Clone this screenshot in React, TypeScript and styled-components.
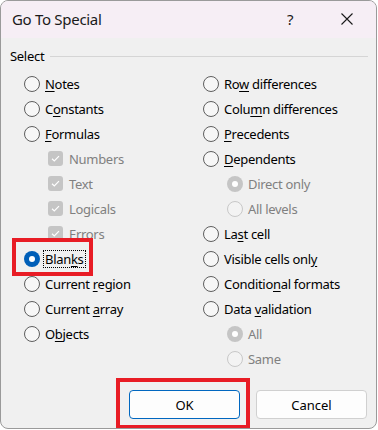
import styled, { createGlobalStyle } from "styled-components";

const Global = createGlobalStyle`
  body {
    margin: 0;
    background: #ffffff;
    font-family: "Noto Sans", "Open Sans", sans-serif;
  }
`;

type Opt = {
  label: string;
  key?: number;
  kind: "radio" | "check";
  indent?: boolean;
  disabled?: boolean;
  checked?: boolean;
  focus?: boolean;
};

const leftCol: Opt[] = [
  { label: "Notes", key: 0, kind: "radio" },
  { label: "Constants", key: 1, kind: "radio" },
  { label: "Formulas", key: 0, kind: "radio" },
  { label: "Numbers", kind: "check", indent: true, disabled: true, checked: true },
  { label: "Text", kind: "check", indent: true, disabled: true, checked: true },
  { label: "Logicals", kind: "check", indent: true, disabled: true, checked: true },
  { label: "Errors", kind: "check", indent: true, disabled: true, checked: true },
  { label: "Blanks", key: 4, kind: "radio", checked: true, focus: true },
  { label: "Current region", key: 8, kind: "radio" },
  { label: "Current array", key: 8, kind: "radio" },
  { label: "Objects", key: 1, kind: "radio" },
];

const rightCol: Opt[] = [
  { label: "Row differences", key: 2, kind: "radio" },
  { label: "Column differences", key: 4, kind: "radio" },
  { label: "Precedents", key: 0, kind: "radio" },
  { label: "Dependents", key: 0, kind: "radio" },
  { label: "Direct only", kind: "radio", indent: true, disabled: true, checked: true },
  { label: "All levels", kind: "radio", indent: true, disabled: true },
  { label: "Last cell", key: 2, kind: "radio" },
  { label: "Visible cells only", key: 17, kind: "radio" },
  { label: "Conditional formats", key: 8, kind: "radio" },
  { label: "Data validation", key: 5, kind: "radio" },
  { label: "All", kind: "radio", indent: true, disabled: true, checked: true },
  { label: "Same", kind: "radio", indent: true, disabled: true },
];

const Label = ({ o }: { o: Opt }) => {
  if (o.key === undefined) return <>{o.label}</>;
  return (
    <>
      {o.label.slice(0, o.key)}
      <AccessKey>{o.label[o.key]}</AccessKey>
      {o.label.slice(o.key + 1)}
    </>
  );
};

const Option = ({ o }: { o: Opt }) => (
  <Row $indent={o.indent}>
    {o.kind === "radio" ? (
      <Radio $checked={o.checked} $disabled={o.disabled} />
    ) : (
      <Check>
        <svg width="11" height="11" viewBox="0 0 11 11">
          <path d="M2 5.8 L4.3 8 L9 3.2" fill="none" stroke="#fff" strokeWidth="1.2" />
        </svg>
      </Check>
    )}
    <Text $disabled={o.disabled} $focus={o.focus} $gap={o.kind === "check" ? 6 : 5}>
      <Label o={o} />
    </Text>
    {o.focus && <Mark />}
  </Row>
);

const App = () => {
  return (
    <>
      <Global />
      <Dialog>
        <TitleBar>
          <Title>Go To Special</Title>
          <Help>?</Help>
          <Close>
            <svg width="12" height="12" viewBox="0 0 12 12">
              <path d="M0.5 0.5 L11.5 11.5 M11.5 0.5 L0.5 11.5" stroke="#1a1a1a" strokeWidth="1.1" />
            </svg>
          </Close>
        </TitleBar>
        <Body>
          <Legend>
            <span>Select</span>
            <Rule />
          </Legend>
          <Columns>
            <Column>
              {leftCol.map((o) => (
                <Option key={o.label} o={o} />
              ))}
            </Column>
            <Column>
              {rightCol.map((o) => (
                <Option key={o.label + (o.indent ? "-sub" : "")} o={o} />
              ))}
            </Column>
          </Columns>
          <Buttons>
            <Button $primary>
              OK
              <Mark $button />
            </Button>
            <Button>Cancel</Button>
          </Buttons>
        </Body>
      </Dialog>
    </>
  );
};

export default App;

const Dialog = styled.div`
  box-sizing: border-box;
  width: 377px;
  height: 429px;
  border: 1px solid #9a9a9a;
  border-radius: 8px;
  overflow: hidden;
  background: #f0f0f0;
  display: flex;
  flex-direction: column;
`;

const TitleBar = styled.div`
  height: 37px;
  background: #f6eef5;
  display: flex;
  align-items: center;
  padding-left: 11px;
  color: #1a1a1a;
`;

const Title = styled.div`
  font-size: 15px;
  letter-spacing: -0.3px;
  flex: 1;
  margin-top: -2px;
`;

const Help = styled.div`
  font-size: 15px;
  width: 16px;
  margin-right: 38px;
  margin-top: -2px;
`;

const Close = styled.div`
  width: 12px;
  height: 12px;
  margin-right: 23px;
  margin-top: -2px;
  display: flex;
`;

const Body = styled.div`
  flex: 1;
  display: flex;
  flex-direction: column;
  padding: 9px 8px 0 9px;
`;

const Legend = styled.div`
  height: 18px;
  display: flex;
  align-items: center;
  gap: 6px;
  font-size: 13px;
  letter-spacing: -0.3px;
  color: #000;
`;

const Rule = styled.div`
  flex: 1;
  height: 1px;
  background: #d5d5d5;
`;

const Columns = styled.div`
  display: grid;
  grid-template-columns: 179px 1fr;
  margin-top: 6px;
  padding-left: 14px;
`;

const Column = styled.div`
  display: flex;
  flex-direction: column;
`;

const Row = styled.div<{ $indent?: boolean }>`
  position: relative;
  height: 25px;
  display: flex;
  align-items: center;
  padding-left: ${(p) => (p.$indent ? 24 : 0)}px;
`;

const Radio = styled.span<{ $checked?: boolean; $disabled?: boolean }>`
  box-sizing: border-box;
  width: 16px;
  height: 16px;
  border-radius: 50%;
  flex-shrink: 0;
  display: flex;
  align-items: center;
  justify-content: center;
  background: ${(p) =>
    p.$checked ? (p.$disabled ? "#c5c5c5" : "#005fb8") : p.$disabled ? "#f3f3f3" : "#f7f7f7"};
  border: 1px solid
    ${(p) => (p.$checked ? "transparent" : p.$disabled ? "#c8c8c8" : "#5e5e5e")};

  &::after {
    content: "";
    display: ${(p) => (p.$checked ? "block" : "none")};
    width: 6px;
    height: 6px;
    border-radius: 50%;
    background: #ffffff;
  }
`;

const Check = styled.span`
  width: 15px;
  height: 15px;
  border-radius: 3px;
  background: #c5c5c5;
  flex-shrink: 0;
  display: flex;
  align-items: center;
  justify-content: center;
`;

const Text = styled.span<{ $disabled?: boolean; $focus?: boolean; $gap: number }>`
  font-size: 13px;
  letter-spacing: -0.3px;
  line-height: 16px;
  color: ${(p) => (p.$disabled ? "#808080" : "#000")};
  margin-left: ${(p) => p.$gap - (p.$focus ? 2 : 0)}px;
  padding: 0 ${(p) => (p.$focus ? 1 : 0)}px;
  border: ${(p) => (p.$focus ? "1px dotted #000" : "none")};
  white-space: nowrap;
`;

const AccessKey = styled.span`
  text-decoration: underline;
  text-underline-offset: 2px;
`;

const Mark = styled.span<{ $button?: boolean }>`
  position: absolute;
  box-sizing: border-box;
  border: 4px solid #e81c25;
  pointer-events: none;
  left: ${(p) => (p.$button ? -14 : -12)}px;
  top: ${(p) => (p.$button ? -13 : -8)}px;
  width: ${(p) => (p.$button ? 134 : 81)}px;
  height: ${(p) => (p.$button ? 51 : 38)}px;
`;

const Buttons = styled.div`
  display: flex;
  justify-content: flex-end;
  gap: 16px;
  margin-top: 19px;
  padding-right: 1px;
`;

const Button = styled.button<{ $primary?: boolean }>`
  position: relative;
  width: 111px;
  height: 29px;
  border-radius: 4px;
  background: #fdfdfd;
  border: 1px solid ${(p) => (p.$primary ? "#0067c0" : "#d0d0d0")};
  font-family: "Noto Sans", "Open Sans", sans-serif;
  font-size: 13px;
  color: #000;
  padding: 0;
`;
